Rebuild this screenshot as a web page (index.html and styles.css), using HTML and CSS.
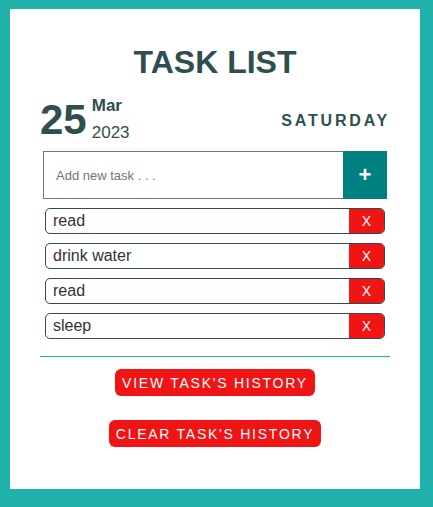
FILE: index.html
```html
<!DOCTYPE html>
<html>
<head>
<meta charset="utf-8">
<link rel="stylesheet" href="styles.css">
</head>
<body>
<div class="card">
  <h1 class="title">TASK LIST</h1>
  <div class="date-row">
    <div class="date">
      <span class="day">25</span>
      <div class="month-year">
        <span class="month">Mar</span>
        <span class="year">2023</span>
      </div>
    </div>
    <span class="weekday">SATURDAY</span>
  </div>
  <div class="add-row">
    <input class="add-input" type="text" placeholder="Add new task . . .">
    <button class="add-btn">+</button>
  </div>
  <ul class="tasks">
    <li class="task"><span class="task-text">read</span><button class="del">X</button></li>
    <li class="task"><span class="task-text">drink water</span><button class="del">X</button></li>
    <li class="task"><span class="task-text">read</span><button class="del">X</button></li>
    <li class="task"><span class="task-text">sleep</span><button class="del">X</button></li>
  </ul>
  <hr class="sep">
  <div class="actions">
    <button class="hist-btn">VIEW TASK'S HISTORY</button>
    <button class="hist-btn">CLEAR TASK'S HISTORY</button>
  </div>
</div>
</body>
</html>
```
FILE: styles.css
```css
* { box-sizing: border-box; }
html, body { margin: 0; padding: 0; }
body {
  background: #20b2aa;
  padding: 9px 13px 18px 10px;
  font-family: "Liberation Sans", Arial, sans-serif;
  height: 507px;
}
.card {
  background: #fff;
  width: 410px;
  height: 480px;
  padding: 33px 30px 0 30px;
}
.title {
  margin: 0;
  text-align: center;
  font-size: 32px;
  line-height: 40px;
  font-weight: bold;
  color: #2f4f4f;
}
.date-row {
  display: flex;
  justify-content: space-between;
  align-items: flex-start;
  margin-top: 14px;
  color: #2f4f4f;
}
.date { display: flex; align-items: flex-start; }
.day {
  font-size: 42px;
  font-weight: bold;
  line-height: 48px;
}
.month-year {
  display: flex;
  flex-direction: column;
  margin-left: 5px;
}
.month { font-size: 17px; font-weight: bold; line-height: 20px; }
.year { font-size: 17px; line-height: 24px; margin-top: 5px; }
.weekday {
  font-size: 16px;
  line-height: 20px;
  font-weight: bold;
  letter-spacing: 2.8px;
  margin-top: 15px;
}
.add-row {
  display: flex;
  margin: 6px 3px 0 3px;
  height: 48px;
}
.add-input {
  flex: 1;
  border: 1px solid #767676;
  border-right: none;
  padding: 0 12px;
  font-family: "Liberation Sans", Arial, sans-serif;
  font-size: 13px;
  outline: none;
}
.add-input::placeholder { color: #757575; }
.add-btn {
  width: 44px;
  border: none;
  background: #008080;
  color: #fff;
  font-size: 22px;
  font-weight: bold;
  font-family: "Liberation Sans", Arial, sans-serif;
  padding: 0;
}
.tasks {
  list-style: none;
  margin: 9px 0 0 5px;
  padding: 0;
  width: 340px;
}
.task {
  display: flex;
  height: 26px;
  border: 1px solid #2f4f4f;
  border-radius: 5px;
  overflow: hidden;
  margin-bottom: 9px;
}
.task:last-child { margin-bottom: 0; }
.task-text {
  flex: 1;
  padding-left: 7px;
  font-size: 16px;
  line-height: 24px;
  color: #333;
}
.del {
  width: 35px;
  border: none;
  background: #f01414;
  color: #fff;
  font-size: 14px;
  font-family: "Liberation Sans", Arial, sans-serif;
  padding: 0;
}
.sep {
  border: none;
  border-top: 1px solid #20b2aa;
  margin: 17px 0 0 0;
  height: 0;
}
.actions {
  display: flex;
  flex-direction: column;
  align-items: center;
  gap: 24px;
  margin-top: 12px;
}
.hist-btn {
  background: #f01414;
  color: #fff;
  border: none;
  border-radius: 6px;
  height: 27px;
  padding: 0 7px;
  font-family: "Liberation Sans", Arial, sans-serif;
  font-size: 14px;
  letter-spacing: 1.75px;
}
```
